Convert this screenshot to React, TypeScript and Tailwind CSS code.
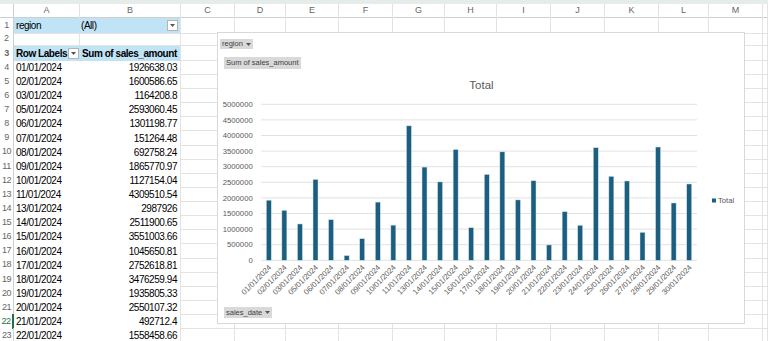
import React from "react";

const COLS = ["A", "B", "C", "D", "E", "F", "G", "H", "I", "J", "K", "L", "M", ""];

const SALES: [string, number][] = [
  ["01/01/2024", 1926638.03],
  ["02/01/2024", 1600586.65],
  ["03/01/2024", 1164208.8],
  ["05/01/2024", 2593060.45],
  ["06/01/2024", 1301198.77],
  ["07/01/2024", 151264.48],
  ["08/01/2024", 692758.24],
  ["09/01/2024", 1865770.97],
  ["10/01/2024", 1127154.04],
  ["11/01/2024", 4309510.54],
  ["13/01/2024", 2987926],
  ["14/01/2024", 2511900.65],
  ["15/01/2024", 3551003.66],
  ["16/01/2024", 1045650.81],
  ["17/01/2024", 2752618.81],
  ["18/01/2024", 3476259.94],
  ["19/01/2024", 1935805.33],
  ["20/01/2024", 2550107.32],
  ["21/01/2024", 492712.4],
  ["22/01/2024", 1558458.66],
  ["23/01/2024", 1122000],
  ["24/01/2024", 3609000],
  ["25/01/2024", 2692000],
  ["26/01/2024", 2542000],
  ["27/01/2024", 897000],
  ["28/01/2024", 3631000],
  ["29/01/2024", 1837000],
  ["30/01/2024", 2446000],
];

const GRID =
  "grid grid-cols-[14px_66px_101px_54px_51px_53px_54px_52px_52px_54px_54px_54px_50px_54px_1fr]";
const CELL = "border-r border-b border-[#e3e3e3]";
const SHEET_FONT = { fontFamily: '"Liberation Sans", Arial, sans-serif' };

function DropBtn() {
  return (
    <div className="flex h-[11px] w-[11px] items-center justify-center border border-[#b4b4b4] bg-white">
      <svg width="5" height="3" viewBox="0 0 5 3">
        <path d="M0 0h5L2.5 3z" fill="#555" />
      </svg>
    </div>
  );
}

function EmptyCells({ from }: { from: number }) {
  return (
    <>
      {COLS.slice(from).map((c, i) => (
        <div key={i} className={CELL} />
      ))}
    </>
  );
}

function RowNum({ n }: { n: number }) {
  const active = n === 22;
  return (
    <div
      className={
        "flex items-center justify-center text-[9px] " +
        (active
          ? "border-r-2 border-[#217346] text-[#217346]"
          : "border-r border-[#cfcfcf] text-[#666]")
      }
    >
      {n}
    </div>
  );
}

function Chart() {
  const base = 227.3;
  const step = 15.6;
  const x0 = 43;
  const slot = 436 / SALES.length;
  const txt = { fontFamily: '"Liberation Sans", Arial, sans-serif' };
  return (
    <div className="absolute left-[217px] top-[32px] h-[292px] w-[528px] border border-[#d9d9d9] bg-white">
      <div className="absolute left-[2px] top-[6px] flex h-[10px] items-center gap-[3px] bg-[#d9d9d9] px-[2px] text-[7.5px] leading-none text-[#404040]" style={txt}>
        region
        <svg width="5" height="3" viewBox="0 0 5 3">
          <path d="M0 0h5L2.5 3z" fill="#555" />
        </svg>
      </div>
      <div className="absolute left-[6px] top-[24px] flex h-[12px] items-center bg-[#d9d9d9] px-[2px] text-[7.5px] leading-none text-[#404040]" style={txt}>
        Sum of sales_amount
      </div>
      <div className="absolute left-[6px] top-[274px] flex h-[11px] items-center gap-[3px] bg-[#d9d9d9] px-[2px] text-[7.5px] leading-none text-[#404040]" style={txt}>
        sales_date
        <svg width="5" height="3" viewBox="0 0 5 3">
          <path d="M0 0h5L2.5 3z" fill="#555" />
        </svg>
      </div>
      <svg width="528" height="292" className="block">
        <text x="263.5" y="56" textAnchor="middle" fontSize="11.5" fill="#595959" style={txt}>
          Total
        </text>
        {Array.from({ length: 11 }).map((_, k) => {
          const y = base - k * step;
          return (
            <g key={k}>
              <line x1={x0} x2={479} y1={y} y2={y} stroke="#e2e2e2" strokeWidth="1" />
              <text x="34.7" y={y + 2.7} textAnchor="end" fontSize="7.7" fill="#595959" style={txt}>
                {k * 500000}
              </text>
            </g>
          );
        })}
        {SALES.map(([d, v], i) => {
          const cx = x0 + (i + 0.5) * slot;
          const h = (v / 500000) * step;
          return (
            <g key={d}>
              <rect x={cx - 2.5} y={base - h} width="5" height={h} fill="#1b5e80" stroke="#d4e3eb" strokeWidth="0.5" />
              <text
                x={cx + 3}
                y={235}
                textAnchor="end"
                fontSize="7.7"
                fill="#595959"
                transform={`rotate(-45 ${cx + 3} 235)`}
                style={txt}
              >
                {d}
              </text>
            </g>
          );
        })}
        <rect x="494" y="165.5" width="4" height="4" fill="#1b5e80" />
        <text x="500" y="170" fontSize="7.7" fill="#595959" style={txt}>
          Total
        </text>
      </svg>
    </div>
  );
}

export default function App() {
  return (
    <div className="relative h-[341px] w-[768px] overflow-hidden bg-white text-black" style={SHEET_FONT}>
      <div className="h-[4px] bg-[#e6ecea]" />
      <div className={GRID + " h-[13.5px] border-b border-[#cfcfcf]"}>
        <div className="border-r border-[#cfcfcf]" />
        {COLS.map((c, i) => (
          <div key={i} className="flex items-center justify-center border-r border-[#e3e3e3] text-[9px] text-[#666]">
            {c}
          </div>
        ))}
      </div>

      {/* row 1: report filter */}
      <div className={GRID + " h-[14.14px] text-[10px] tracking-[-0.45px]"}>
        <RowNum n={1} />
        <div className="flex items-center border-b border-[#e3e3e3] bg-[#c0e4f5] pl-[2px]">region</div>
        <div className="flex items-center justify-between border-r border-b border-[#e3e3e3] bg-[#c0e4f5] pl-[1px] pr-[2px]">
          (All)
          <DropBtn />
        </div>
        <EmptyCells from={2} />
      </div>

      {/* row 2 */}
      <div className={GRID + " h-[14.14px]"}>
        <RowNum n={2} />
        <EmptyCells from={0} />
      </div>

      {/* row 3: pivot header */}
      <div className={GRID + " h-[14.14px] text-[10px] font-bold tracking-[-0.45px]"}>
        <RowNum n={3} />
        <div className="flex items-center justify-between bg-[#c0e4f5] pl-[2px] pr-[1px]">
          Row Labels
          <DropBtn />
        </div>
        <div className="flex items-center border-r border-[#e3e3e3] bg-[#c0e4f5] pl-[2px]">Sum of sales_amount</div>
        <EmptyCells from={2} />
      </div>

      {SALES.slice(0, 20).map(([d, v], i) => (
        <div key={d} className={GRID + " h-[14.14px] text-[10px] tracking-[-0.45px]"}>
          <RowNum n={i + 4} />
          <div className="flex items-center pl-[2px]">{d}</div>
          <div className="flex items-center justify-end border-r border-[#e3e3e3] pr-[3px]">{String(v)}</div>
          <EmptyCells from={2} />
        </div>
      ))}

      <Chart />
    </div>
  );
}
